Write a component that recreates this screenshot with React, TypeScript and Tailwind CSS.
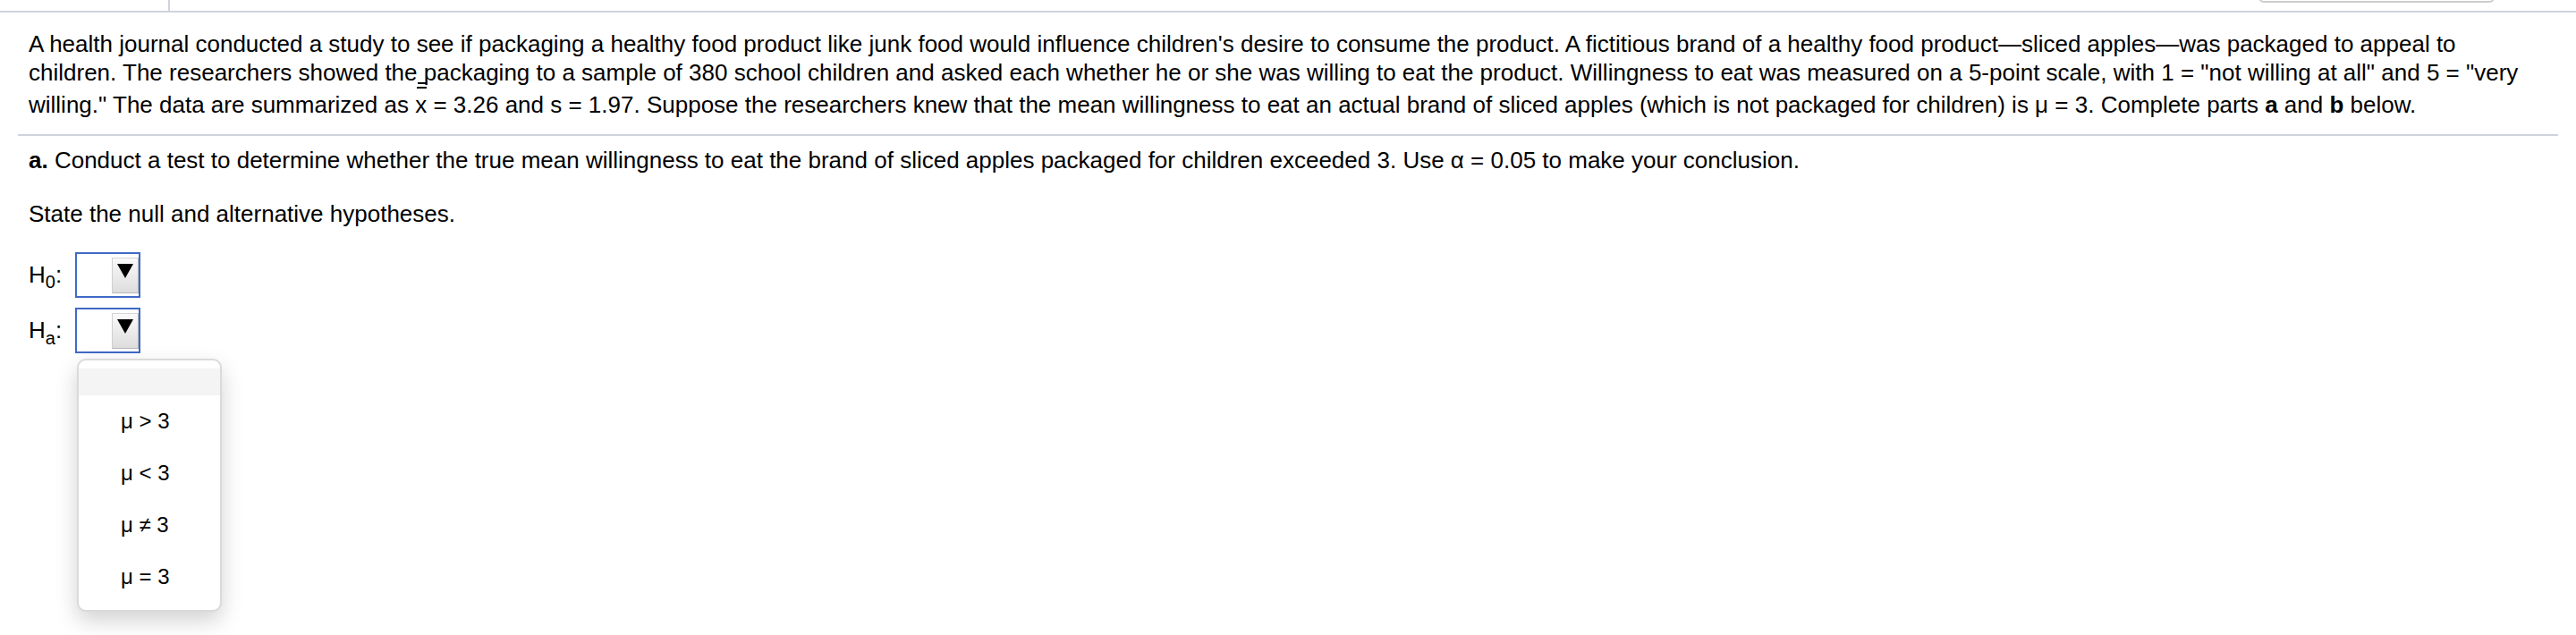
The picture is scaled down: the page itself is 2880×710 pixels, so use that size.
import React from "react";

function Arrow() {
  return (
    <svg width="18" height="16" viewBox="0 0 18 16" className="block">
      <polygon points="0,0 18,0 9,16" fill="#000" />
    </svg>
  );
}

function SelectBox() {
  return (
    <div className="w-[73px] h-[51px] border-2 border-[#4069c6] bg-white flex justify-end items-start pt-[4px]">
      <div className="w-[30px] h-[40px] border border-[#b8b8b8] border-t-[#d6d6d6] border-l-[#d0d0d0] bg-linear-to-b from-[#fafafa] to-[#dddddd] flex justify-center items-start pt-[6px]">
        <Arrow />
      </div>
    </div>
  );
}

function XBar() {
  return (
    <span className="relative inline-block leading-[32px]">
      <span className="absolute right-0 top-[-5px] w-[10px] h-[2px] bg-black" />
      <span className="block h-[2px] w-[11px] ml-auto bg-black mb-[2px]" />
      <span className="block">x</span>
    </span>
  );
}

export default function App() {
  const options = ["μ > 3", "μ < 3", "μ ≠ 3", "μ = 3"];
  return (
    <div className="w-[2880px] h-[710px] bg-white text-black overflow-hidden font-['Liberation_Sans',Arial,sans-serif]">
      {/* top strip */}
      <div className="h-[14px] border-b-2 border-[#cfd3de] flex">
        <div className="w-[190px] h-full border-r-2 border-[#cfd3de]" />
        <div className="flex-1" />
        <div className="w-[264px] h-[12px] -mt-[9px] border-2 border-[#cccccc] rounded-b-[6px] mr-[91px]" />
      </div>

      <div className="mx-[20px]">
        <p className="pt-[19px] pb-[17px] px-[12px] text-[26px] leading-[32px] border-b-2 border-[#cfd3de]">
          A health journal conducted a study to see if packaging a healthy food product like junk food would influence
          children's desire to consume the product. A fictitious brand of a healthy food product—sliced apples—was
          packaged to appeal to children. The researchers showed the packaging to a sample of 380 school children and
          asked each whether he or she was willing to eat the product. Willingness to eat was measured on a 5-point
          scale, with 1 = "not willing at all" and 5 = "very willing." The data are summarized as <XBar /> = 3.26 and
          s = 1.97. Suppose the researchers knew that the mean willingness to eat an actual brand of sliced apples (which
          is not packaged for children) is μ = 3. Complete parts <b>a</b> and <b>b</b> below.
        </p>

        <div className="mt-[11px] px-[12px] text-[26px] leading-[32px]">
          <b>a.</b> Conduct a test to determine whether the true mean willingness to eat the brand of sliced apples
          packaged for children exceeded 3. Use α = 0.05 to make your conclusion.
        </div>

        <div className="mt-[28px] px-[12px] text-[26px] leading-[32px]">State the null and alternative hypotheses.</div>

        <div className="mt-[27px] px-[12px] flex items-center text-[26px] leading-[32px]">
          <span className="w-[52px] whitespace-nowrap">
            H<span className="relative top-[6px] text-[20px]">0</span>:
          </span>
          <SelectBox />
        </div>

        <div className="mt-[11px] px-[12px] flex items-center text-[26px] leading-[32px]">
          <span className="w-[52px] whitespace-nowrap">
            H<span className="relative top-[7px] text-[20px]">a</span>:
          </span>
          <div className="relative">
            <SelectBox />
            <div className="absolute left-[2px] top-[57px] z-10 w-[162px] h-[283px] rounded-[10px] border-2 border-[#dadada] bg-white shadow-[0_10px_24px_rgba(0,0,0,0.18)] overflow-hidden pt-[9px]">
              <div className="h-[30px] bg-[#f4f4f4]" />
              {options.map((o) => (
                <div key={o} className="h-[58px] flex items-center pl-[47px] text-[24px] leading-[28px] whitespace-nowrap">
                  {o}
                </div>
              ))}
            </div>
          </div>
        </div>
      </div>
    </div>
  );
}
